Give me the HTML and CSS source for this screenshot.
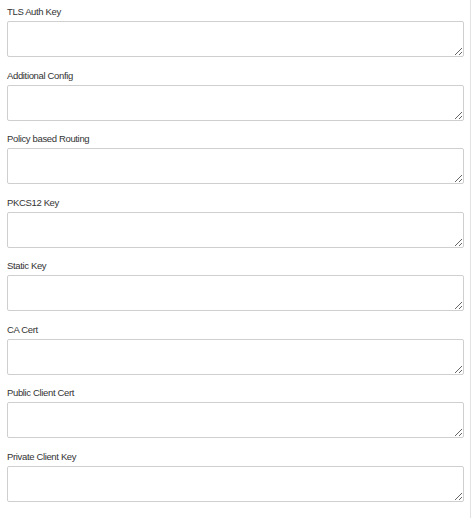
FILE: index.html
```html
<!DOCTYPE html>
<html lang="en">

<head>
    <meta charset="UTF-8">
    <meta name="viewport" content="width=device-width, initial-scale=1.0">
    <title>VPN Keys</title>
    <link rel="stylesheet" href="styles.css">
</head>

<body>
    <div class="panel">
        <div class="field">
            <label class="field-label" for="tls-auth">TLS Auth Key</label>
            <textarea class="field-input" id="tls-auth"></textarea>
        </div>
        <div class="field">
            <label class="field-label" for="extra-config">Additional Config</label>
            <textarea class="field-input" id="extra-config"></textarea>
        </div>
        <div class="field">
            <label class="field-label" for="pbr">Policy based Routing</label>
            <textarea class="field-input" id="pbr"></textarea>
        </div>
        <div class="field">
            <label class="field-label" for="pkcs12">PKCS12 Key</label>
            <textarea class="field-input" id="pkcs12"></textarea>
        </div>
        <div class="field">
            <label class="field-label" for="static-key">Static Key</label>
            <textarea class="field-input" id="static-key"></textarea>
        </div>
        <div class="field">
            <label class="field-label" for="ca-cert">CA Cert</label>
            <textarea class="field-input" id="ca-cert"></textarea>
        </div>
        <div class="field">
            <label class="field-label" for="client-cert">Public Client Cert</label>
            <textarea class="field-input" id="client-cert"></textarea>
        </div>
        <div class="field">
            <label class="field-label" for="client-key">Private Client Key</label>
            <textarea class="field-input" id="client-key"></textarea>
        </div>
    </div>
</body>

</html>
```

FILE: styles.css
```css
body {
    margin: 0;
    background-color: #fff;
    font-family: "Liberation Sans", Arial, sans-serif;
    overflow: hidden;
}

.panel {
    width: 457px;
    min-height: 513px;
    padding: 5px 6px 0 7px;
    border-right: 1px solid #e2e2e2;
    display: flex;
    flex-direction: column;
    gap: 11.5px;
}

.field {
    display: flex;
    flex-direction: column;
}

.field-label {
    font-size: 9.5px;
    line-height: 14px;
    letter-spacing: -0.35px;
    color: #333;
    margin-bottom: 2px;
}

.field-input {
    box-sizing: border-box;
    width: 457px;
    height: 36px;
    margin: 0;
    padding: 4px 6px;
    border: 1px solid #cfcfcf;
    border-radius: 2px;
    background-color: #fff;
    font-family: inherit;
    font-size: 11px;
}
```
